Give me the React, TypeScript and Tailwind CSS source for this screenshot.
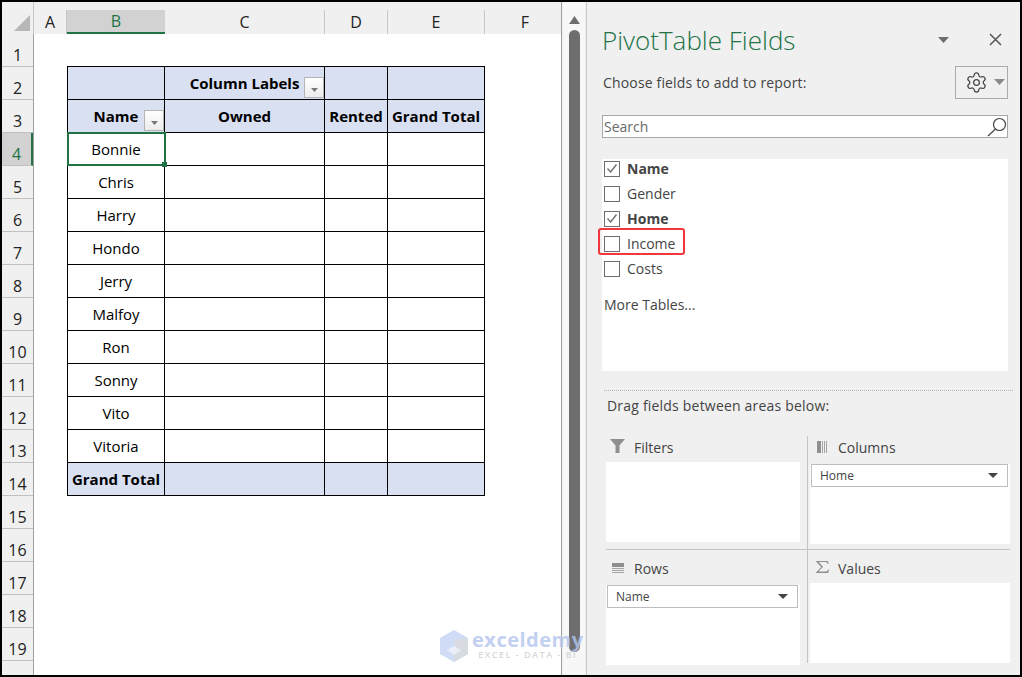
const font = { fontFamily: '"Open Sans", "Noto Sans", sans-serif' };

const columns = [
  { label: "A", cls: "w-[33px]" },
  { label: "B", cls: "w-[98px]", selected: true },
  { label: "C", cls: "w-[160px]" },
  { label: "D", cls: "w-[63px]" },
  { label: "E", cls: "w-[97px]" },
  { label: "F", cls: "w-[76px]", shift: true },
];

const names = ["Bonnie", "Chris", "Harry", "Hondo", "Jerry", "Malfoy", "Ron", "Sonny", "Vito", "Vitoria"];
const rowNums = Array.from({ length: 19 }, (_, i) => i + 1);

function FilterButton() {
  return (
    <div className="absolute right-0 bottom-[1px] flex h-[21px] w-[20px] items-end justify-center border border-[#b4b4b4] bg-gradient-to-b from-white to-[#ececec] pb-[5px]">
      <svg width="7" height="4" viewBox="0 0 7 4"><path d="M0 0h7L3.5 4z" fill="#777" /></svg>
    </div>
  );
}

function Cell({ kind, children, filter, selected }: { kind?: "head" | "body"; children?: any; filter?: boolean; selected?: boolean }) {
  const base = "relative flex items-center justify-center border-r border-b border-black text-[15px] leading-none text-black";
  return (
    <div className={kind === "head" ? `${base} bg-[#d9e0f2] font-bold` : `${base} bg-white`}>
      {children}
      {filter && <FilterButton />}
      {selected && (
        <div className="absolute -left-px -top-px -right-[2px] -bottom-px z-10 border-2 border-[#217346]">
          <div className="absolute -right-[3px] -bottom-[3px] h-[5px] w-[5px] bg-[#217346]" />
        </div>
      )}
    </div>
  );
}

function Check({ checked }: { checked?: boolean }) {
  return (
    <div className="flex h-[16px] w-[16px] shrink-0 items-center justify-center border border-[#6e6e6e] bg-white">
      {checked && (
        <svg width="12" height="11" viewBox="0 0 12 11" fill="none"><path d="M1.5 5.5 4.6 9 10.5 1.5" stroke="#7a7a7a" strokeWidth="1.6" /></svg>
      )}
    </div>
  );
}

function FieldRow({ label, checked }: { label: string; checked?: boolean }) {
  return (
    <div className="flex h-[25px] items-center gap-[7px] pb-[6px] pl-[2px] text-[#444]">
      <Check checked={checked} />
      <span className={checked ? "text-[14px] font-bold" : "text-[14px]"}>{label}</span>
    </div>
  );
}

function Chip({ label }: { label: string }) {
  return (
    <div className="mt-[2px] ml-px mr-[2px] flex h-[23px] items-center justify-between border border-[#bdbdbd] bg-white pl-[8px] pr-[9px] text-[12px] text-[#444]">
      <span>{label}</span>
      <svg width="10" height="5" viewBox="0 0 10 5"><path d="M0 0h10L5 5z" fill="#444" /></svg>
    </div>
  );
}

const FilterIcon = (
  <svg width="15" height="14" viewBox="0 0 15 14"><path d="M0 0h15L9.5 6.5V14h-4V6.5z" fill="#8f8f8f" /></svg>
);
const ColumnsIcon = (
  <svg width="11" height="12" viewBox="0 0 11 12"><path d="M0 0h4v12H0z" fill="#8f8f8f" /><path d="M5 0h1v12H5zM7 0h1v12H7zM9 0h1v12H9z" fill="#a5a5a5" /></svg>
);
const RowsIcon = (
  <svg width="12" height="10" viewBox="0 0 12 10"><path d="M0 0h12v4H0z" fill="#8f8f8f" /><path d="M0 5h12v1H0zM0 7h12v1H0zM0 9h12v1H0z" fill="#a5a5a5" /></svg>
);
const SigmaIcon = (
  <svg width="13" height="12" viewBox="0 0 13 12"><path d="M0 0h12l.6 3h-.7C11.300 1.500 10.500 1 9 1H2.700L7 5.700 2.500 10.500H9c1.800 0 2.700-.6 3.200-2.300h.7L12.300 12H0v-.6L5.200 6 0 .6z" fill="#8f8f8f" /></svg>
);

function Area({ label, icon, iconCls, top, right, chip }: { label: string; icon: any; iconCls: string; top?: boolean; right?: boolean; chip?: string }) {
  return (
    <div className={`${top ? "h-[114px] border-b border-[#c4c4c4]" : "h-[113px]"} ${right ? "pl-[2px]" : "border-r border-[#c4c4c4]"}`}>
      <div className={top ? "flex h-[26px] items-center pb-[4px]" : "flex h-[33px] items-center pt-[3px]"}>
        <span className={`flex w-[28px] ${iconCls}`}>{icon}</span>
        <span className="text-[14px] text-[#444]">{label}</span>
      </div>
      <div className={right ? "h-[80px] w-[200px] bg-white" : "h-[80px] w-[194px] bg-white"}>
        {chip && <Chip label={chip} />}
      </div>
    </div>
  );
}

export default function App() {
  return (
    <div style={font} className="relative flex h-[677px] w-[1022px] overflow-hidden bg-black p-[2px] pr-[2px]">
      {/* Sheet */}
      <div className="flex h-[673px] w-[559px] flex-col bg-white">
        <div className="flex h-[32px] shrink-0 bg-[#f0f0f0]">
          <div className="flex w-[32px] items-end justify-end border-r border-[#c6c6c6] pb-[3px] pr-[3px]">
            <svg width="16" height="16" viewBox="0 0 16 16"><path d="M16 0v16H0z" fill="#b7b7b7" /></svg>
          </div>
          {columns.map((c) => (
            <div key={c.label} className={`${c.cls} pt-[8px]`}>
              <div
                className={
                  c.selected
                    ? "flex h-[24px] items-center justify-center border-b-2 border-[#217346] bg-[#d2d2d2] text-[16px] text-[#217346]"
                    : c.shift
                      ? "flex h-[24px] items-center justify-center pl-[4px] text-[16px] text-[#222]"
                      : "flex h-[24px] items-center justify-center border-r border-[#c6c6c6] text-[16px] text-[#222]"
                }
              >
                {c.label}
              </div>
            </div>
          ))}
        </div>
        <div className="flex min-h-0 flex-1 overflow-hidden">
          <div className="w-[32px] shrink-0 border-r border-[#a0a0a0] bg-[#f0f0f0]">
            {rowNums.map((n) => (
              <div
                key={n}
                className={
                  n === 4
                    ? "flex h-[33px] items-center justify-center border-b border-[#c0c0c0] border-r-2 border-r-[#217346] bg-[#d2d2d2] pt-[9px] text-[16px] leading-none text-[#217346]"
                    : "flex h-[33px] items-center justify-center border-b border-[#c0c0c0] pt-[9px] text-[16px] leading-none text-[#222]"
                }
              >
                {n}
              </div>
            ))}
          </div>
          <div className="flex-1 pl-[33px] pt-[32px]">
            <div className="grid w-[418px] grid-cols-[97px_160px_63px_97px] auto-rows-[33px] border-l border-t border-black">
              <Cell kind="head" />
              <Cell kind="head" filter>Column Labels</Cell>
              <Cell kind="head" />
              <Cell kind="head" />
              <Cell kind="head" filter>Name</Cell>
              <Cell kind="head">Owned</Cell>
              <Cell kind="head">Rented</Cell>
              <Cell kind="head">Grand Total</Cell>
              {names.map((n, i) => (
                <div key={n} className="contents">
                  <Cell selected={i === 0}>{n}</Cell>
                  <Cell />
                  <Cell />
                  <Cell />
                </div>
              ))}
              <Cell kind="head">Grand Total</Cell>
              <Cell kind="head" />
              <Cell kind="head" />
              <Cell kind="head" />
            </div>
          </div>
        </div>
      </div>

      {/* Scrollbar */}
      <div className="flex h-[673px] w-[26px] shrink-0 justify-center border-l border-r border-l-[#a0a0a0] border-r-[#c8c8c8] bg-[#f0f0f0]">
        <div className="flex h-full w-[22px] flex-col items-center bg-[#f7f7f7] pt-[14px]">
          <svg width="11" height="8" viewBox="0 0 11 8"><path d="M5.500 0 11 8H0z" fill="#6e6e6e" /></svg>
          <div className="mt-[6px] h-[622px] w-[11px] rounded-full bg-[#6e6e6e]" />
        </div>
      </div>

      {/* Panel */}
      <div className="flex h-[673px] w-[433px] flex-col bg-[#f0f0f0] pl-[15px] pr-[12px] pt-[20px]">
        <div className="flex h-[35px] items-center justify-between">
          <span className="text-[26px] font-light leading-none text-[#217346]">PivotTable Fields</span>
          <div className="flex items-center gap-[40px] pr-[6px]">
            <svg width="11" height="6" viewBox="0 0 11 6"><path d="M0 0h11L5.500 6z" fill="#6e6e6e" /></svg>
            <svg width="13" height="13" viewBox="0 0 13 13" fill="none"><path d="M1 1l11 11M12 1 1 12" stroke="#555" strokeWidth="1.500" /></svg>
          </div>
        </div>
        <div className="mt-[9px] flex h-[32px] w-[406px] items-center justify-between">
          <span className="pl-px text-[14px] tracking-[0.16px] text-[#444]">Choose fields to add to report:</span>
          <div className="flex h-[33px] w-[53px] items-center gap-[6px] border border-[#ababab] pl-[9px]">
            <svg width="23" height="23" viewBox="0 0 24 24" fill="none" stroke="#444" strokeWidth="1.300" strokeLinejoin="round">
              <path d="M9.671 4.136a2.340 2.340 0 0 1 4.659 0 2.340 2.340 0 0 0 3.319 1.915 2.340 2.340 0 0 1 2.330 4.033 2.340 2.340 0 0 0 0 3.831 2.340 2.340 0 0 1-2.330 4.033 2.340 2.340 0 0 0-3.319 1.915 2.340 2.340 0 0 1-4.659 0 2.340 2.340 0 0 0-3.320-1.915 2.340 2.340 0 0 1-2.330-4.033 2.340 2.340 0 0 0 0-3.831A2.340 2.340 0 0 1 6.350 6.051a2.340 2.340 0 0 0 3.319-1.915" />
              <circle cx="12" cy="12" r="3" />
            </svg>
            <svg width="11" height="6" viewBox="0 0 11 6"><path d="M0 0h11L5.500 6z" fill="#8a8a8a" /></svg>
          </div>
        </div>
        <div className="mt-[17px] flex h-[23px] w-[406px] items-center justify-between border border-[#a8a8a8] bg-white pl-px">
          <span className="text-[14px] text-[#6a6a6a]">Search</span>
          <svg width="20" height="20" viewBox="0 0 20 20" fill="none" stroke="#444" strokeWidth="1.200"><circle cx="12.500" cy="7.500" r="6" /><path d="M8.500 12 1 19" /></svg>
        </div>
        <div className="mt-[21px] h-[212px] w-[406px] bg-white">
          <FieldRow label="Name" checked />
          <FieldRow label="Gender" />
          <FieldRow label="Home" checked />
          <div className="relative">
            <FieldRow label="Income" />
            <div className="absolute left-[-4px] top-[-6px] h-[27px] w-[87px] rounded-[3px] border-2 border-[#f0383c]" />
          </div>
          <FieldRow label="Costs" />
          <div className="mt-[10px] pl-[2px] text-[14px] text-[#444]">More Tables...</div>
        </div>
        <div className="ml-[2px] mt-[19px] w-[409px] border-t border-dotted border-[#b4b4b4]" />
        <div className="ml-[5px] mt-[4px] flex h-[20px] items-center text-[14px] tracking-[0.2px] text-[#444]">Drag fields between areas below:</div>
        <div className="ml-[4px] mt-[21px] grid w-[404px] grid-cols-[202px_202px]">
          <Area top label="Filters" icon={FilterIcon} iconCls="pl-[4px] pb-[2px]" />
          <Area top right label="Columns" icon={ColumnsIcon} iconCls="pl-[7px]" chip="Home" />
          <Area label="Rows" icon={RowsIcon} iconCls="pl-[6px]" chip="Name" />
          <Area right label="Values" icon={SigmaIcon} iconCls="pl-[6px] pb-[2px]" />
        </div>
      </div>

      {/* Watermark */}
      <div className="absolute left-[440px] top-[630px] flex items-start gap-[4px] opacity-80">
        <svg width="28" height="32" viewBox="0 0 28 32">
          <path d="M14 0 28 8v16L14 32 0 24V8z" fill="#c5d3f3" />
          <path d="M14 10 28 8v16L14 32z" fill="#cfd4dc" />
          <path d="M14 16 21 20 14 25 7 20z" fill="#e6ebf7" />
        </svg>
        <div className="flex flex-col items-center">
          <span className="text-[20px] font-bold leading-[20px] tracking-[0.5px] text-[#b4c5ee]">exceldemy</span>
          <span className="text-[9px] font-semibold leading-[10px] tracking-[1.5px] text-[#cfcfcf]">EXCEL - DATA - BI</span>
        </div>
      </div>
    </div>
  );
}
